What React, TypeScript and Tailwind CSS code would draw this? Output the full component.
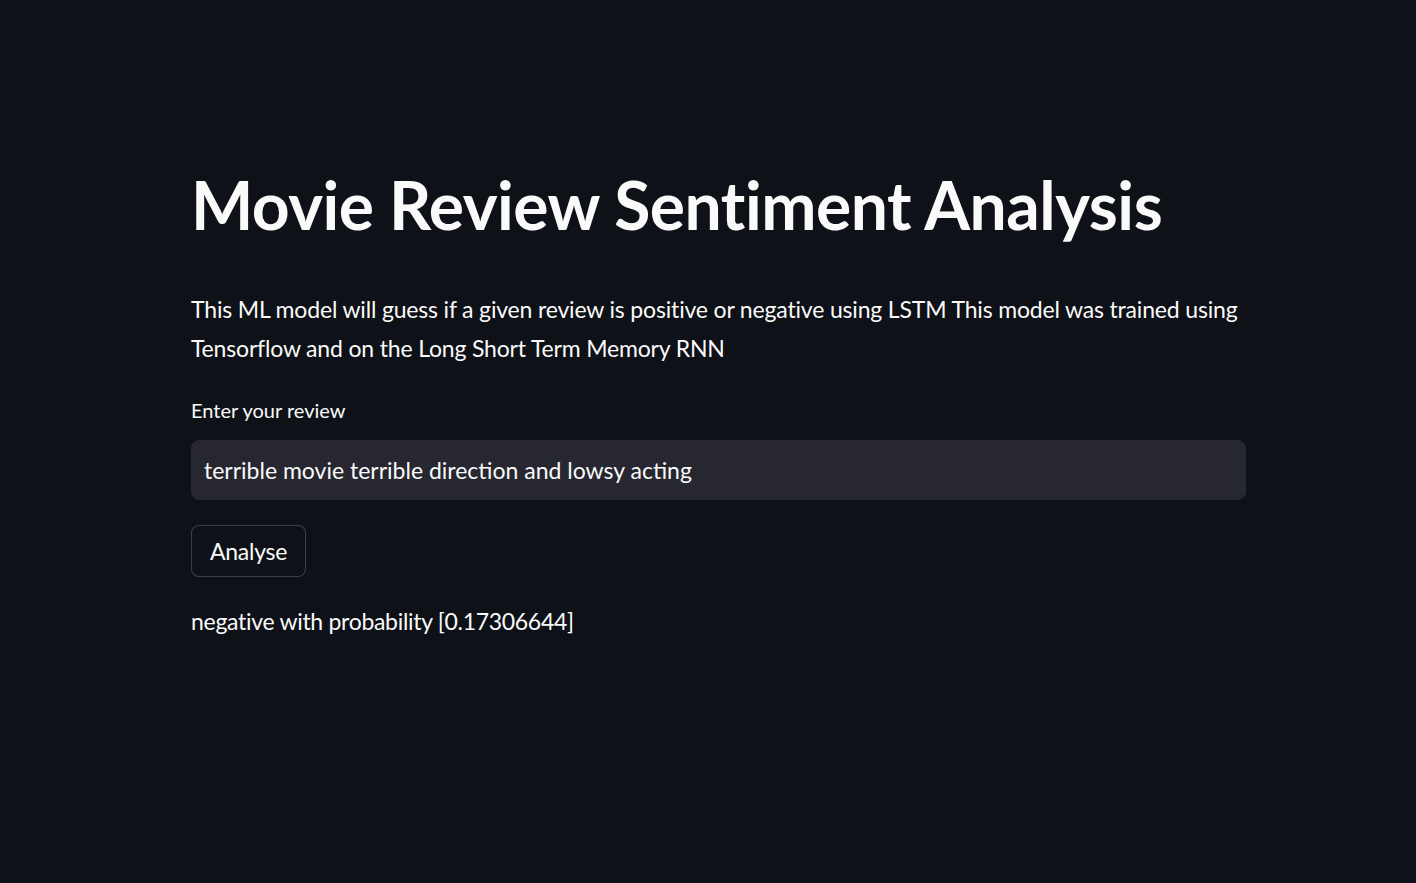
import React from "react";

export default function App() {
  return (
    <div className="min-h-[883px] w-full bg-[#0e1117] text-[#fafafa]" style={{ fontFamily: 'Lato, "Noto Sans", sans-serif' }}>
      <div className="ml-[191px] w-[1055px] pt-[160px]">
        <h1 className="text-[66px] font-bold leading-[90px] tracking-[-0.5px]">Movie Review Sentiment Analysis</h1>
        <p className="mt-[40px] text-[23px] leading-[39px] tracking-[-0.17px]">
          This ML model will guess if a given review is positive or negative using LSTM This model was trained using Tensorflow and on the Long Short Term Memory RNN
        </p>
        <label className="mt-[28px] block text-[20px] leading-[28px]">Enter your review</label>
        <div className="mt-[16px] flex h-[60px] items-center rounded-[8px] border border-[#262730] bg-[#262730] px-[12px] text-[23px]">
          terrible movie terrible direction and lowsy acting
        </div>
        <button className="mt-[25px] flex h-[52px] items-center rounded-[8px] border border-[rgba(250,250,250,0.2)] bg-[#0e1117] px-[18px] text-[23px] tracking-[-0.25px]">
          Analyse
        </button>
        <p className="mt-[25px] text-[23px] leading-[38px] tracking-[-0.3px]">negative with probability [0.17306644]</p>
      </div>
    </div>
  );
}
